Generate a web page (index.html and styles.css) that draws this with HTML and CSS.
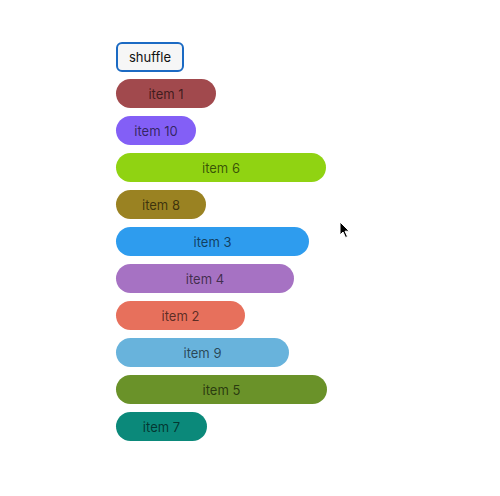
FILE: index.html
```html
<!DOCTYPE html>
<html>
<head>
<meta charset="utf-8">
<link rel="stylesheet" href="styles.css">
</head>
<body>
<div class="page">
  <button class="shuffle">shuffle</button>
  <ul class="list">
    <li class="item" style="width:100px;background:#a1494d">item 1</li>
    <li class="item" style="width:80px;background:#835ff6">item 10</li>
    <li class="item" style="width:210px;background:#90d312">item 6</li>
    <li class="item" style="width:90px;background:#9a8222">item 8</li>
    <li class="item" style="width:193px;background:#2e9cee">item 3</li>
    <li class="item" style="width:178px;background:#a672c3">item 4</li>
    <li class="item" style="width:129px;background:#e7705c">item 2</li>
    <li class="item" style="width:173px;background:#68b3dc">item 9</li>
    <li class="item" style="width:211px;background:#6a9229">item 5</li>
    <li class="item" style="width:91px;background:#0b897a">item 7</li>
  </ul>
</div>
<svg class="cursor" width="12" height="18" viewBox="0 0 12 18">
  <path d="M1 1 L1 14 L4 11 L6.5 16.5 L8.5 15.6 L6 10.2 L10.2 10.2 Z" fill="#000" stroke="#fff" stroke-width="1"/>
</svg>
</body>
</html>
```
FILE: styles.css
```css
html, body {
  margin: 0;
  padding: 0;
  background: #fff;
}
body {
  font-family: Inter, "Noto Sans", sans-serif;
  position: relative;
  width: 500px;
  height: 496px;
  overflow: hidden;
}
.page {
  padding: 42px 0 0 116px;
  display: flex;
  flex-direction: column;
  align-items: flex-start;
}
.shuffle {
  width: 68px;
  height: 30px;
  margin: 0 0 7px 0;
  padding: 0;
  border: 2px solid #1b6ac3;
  border-radius: 6px;
  background: #f6f6f6;
  color: #111;
  font-family: Inter, "Noto Sans", sans-serif;
  font-size: 13px;
}
.list {
  list-style: none;
  margin: 0;
  padding: 0;
  display: flex;
  flex-direction: column;
  gap: 8px;
}
.item {
  height: 29px;
  border-radius: 15px;
  display: flex;
  align-items: center;
  justify-content: center;
  font-size: 13px;
  color: rgba(0, 0, 0, 0.62);
}
.cursor {
  position: absolute;
  left: 339px;
  top: 221px;
}
```
